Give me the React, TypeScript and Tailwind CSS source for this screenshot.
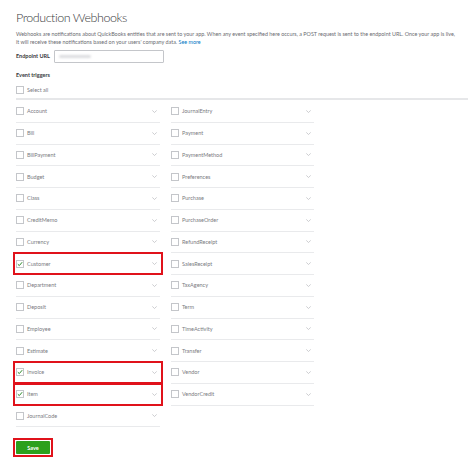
import React from "react";

const left = [
  "Account","Bill","BillPayment","Budget","Class","CreditMemo","Currency","Customer",
  "Department","Deposit","Employee","Estimate","Invoice","Item","JournalCode",
];
const right = [
  "JournalEntry","Payment","PaymentMethod","Preferences","Purchase","PurchaseOrder",
  "RefundReceipt","SalesReceipt","TaxAgency","Term","TimeActivity","Transfer","Vendor","VendorCredit",
];
const checked = new Set(["Customer", "Invoice", "Item"]);

function Box({ on }: { on?: boolean }) {
  return (
    <span className="flex h-[8px] w-[8px] shrink-0 items-center justify-center border border-[#c4c6ca] bg-white">
      {on && (
        <svg width="6" height="6" viewBox="0 0 6 6">
          <polyline points="0.8,3.2 2.3,4.6 5.2,1.2" fill="none" stroke="#2b8a2a" strokeWidth="1" />
        </svg>
      )}
    </span>
  );
}

function Chevron() {
  return (
    <svg width="5" height="3" viewBox="0 0 5 3" className="shrink-0">
      <polyline points="0.3,0.4 2.5,2.5 4.7,0.4" fill="none" stroke="#b7b9bd" strokeWidth="0.7" />
    </svg>
  );
}

function Row({ name }: { name: string }) {
  const on = checked.has(name);
  return (
    <div className="relative flex h-[21.75px] items-center border-b border-[#e9eaec]">
      <Box on={on} />
      <span className="ml-[3px] flex-1 text-[5.5px] text-[#7a7b7f]">{name}</span>
      <span className="mr-[3px]"><Chevron /></span>
      {on && (
        <div className="pointer-events-none absolute left-[-3px] right-[-3px] top-[-1px] bottom-[-1px] border-2 border-[#e0121b]" />
      )}
    </div>
  );
}

export default function App() {
  return (
    <div
      className="h-[467px] w-[474px] overflow-hidden bg-white pl-4 pr-[6px] pt-[10px] text-[#393a3d]"
      style={{ fontFamily: "Lato, 'Open Sans', sans-serif" }}
    >
      <h1 className="text-[12.5px] font-light leading-[15px] tracking-[-0.45px] text-[#393a3d]">Production Webhooks</h1>
      <p className="mt-[5px] whitespace-nowrap text-[5.4px] leading-[8px] text-[#6b6c72]">
        Webhooks are notifications about QuickBooks entities that are sent to your app. When any event specified here occurs, a POST request is sent to the endpoint URL. Once your app is live,
        <br />
        it will receive these notifications based on your users' company data. <span className="text-[#0077c5]">See more</span>
      </p>
      <div className="mt-[4px] flex items-center">
        <span className="text-[5.5px] font-bold text-[#393a3d]">Endpoint URL</span>
        <div className="ml-[4px] flex h-[13px] w-[110px] items-center rounded-[1px] border border-[#c4c6ca] px-[4px]">
          <span className="h-[3px] w-[32px] rounded-full bg-[#dcdde0] blur-[1px]" />
        </div>
      </div>
      <div className="mt-[8px] text-[5.5px] font-bold leading-[8px] text-[#393a3d]">Event triggers</div>
      <div className="mt-[6px] flex h-[10px] items-center">
        <Box />
        <span className="ml-[3px] text-[5.5px] text-[#7a7b7f]">Select all</span>
      </div>
      <div className="mt-[3px] h-[2px] w-[452px] bg-[#e6e7e9]" />
      <div className="mt-[1px] flex gap-[11px]">
        <div className="w-[144px]">
          {left.map((n) => <Row key={n} name={n} />)}
        </div>
        <div className="w-[143px]">
          {right.map((n) => <Row key={n} name={n} />)}
        </div>
      </div>
      <div className="ml-[-3px] mt-[11px] inline-flex border-2 border-[#e0121b] p-[1px]">
        <button className="flex h-[13px] w-[34px] items-center justify-center rounded-[1px] bg-[#2ca01c] text-[5.5px] font-bold text-white">
          Save
        </button>
      </div>
    </div>
  );
}
